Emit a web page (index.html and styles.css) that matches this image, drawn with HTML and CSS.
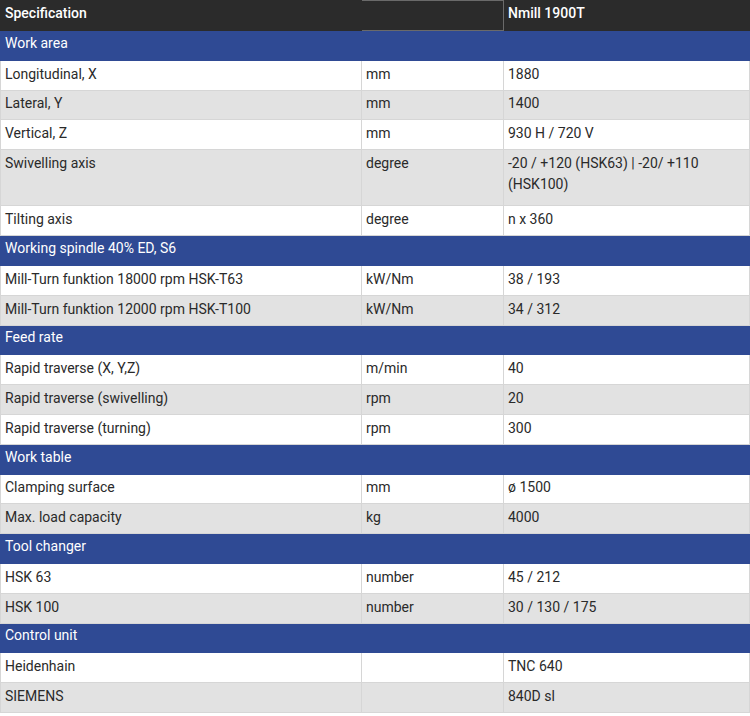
FILE: index.html
```html
<!DOCTYPE html>
<html>
<head>
<meta charset="utf-8">
<link rel="stylesheet" href="styles.css">
</head>
<body>
<table class="spec">
  <colgroup>
    <col class="c1"><col class="c2"><col class="c3">
  </colgroup>
  <thead>
    <tr class="head"><th>Specification</th><th></th><th>Nmill 1900T</th></tr>
  </thead>
  <tbody>
    <tr class="sec"><td colspan="3">Work area</td></tr>
    <tr><td>Longitudinal, X</td><td>mm</td><td>1880</td></tr>
    <tr class="alt"><td>Lateral, Y</td><td>mm</td><td>1400</td></tr>
    <tr><td>Vertical, Z</td><td>mm</td><td>930 H / 720 V</td></tr>
    <tr class="alt tall"><td>Swivelling axis</td><td>degree</td><td>-20 / +120 (HSK63) | -20/ +110 (HSK100)</td></tr>
    <tr><td>Tilting axis</td><td>degree</td><td>n x 360</td></tr>
    <tr class="sec"><td colspan="3">Working spindle 40% ED, S6</td></tr>
    <tr><td>Mill-Turn funktion 18000 rpm HSK-T63</td><td>kW/Nm</td><td>38 / 193</td></tr>
    <tr class="alt"><td>Mill-Turn funktion 12000 rpm HSK-T100</td><td>kW/Nm</td><td>34 / 312</td></tr>
    <tr class="sec"><td colspan="3">Feed rate</td></tr>
    <tr><td>Rapid traverse (X, Y,Z)</td><td>m/min</td><td>40</td></tr>
    <tr class="alt"><td>Rapid traverse (swivelling)</td><td>rpm</td><td>20</td></tr>
    <tr><td>Rapid traverse (turning)</td><td>rpm</td><td>300</td></tr>
    <tr class="sec"><td colspan="3">Work table</td></tr>
    <tr><td>Clamping surface</td><td>mm</td><td>ø 1500</td></tr>
    <tr class="alt"><td>Max. load capacity</td><td>kg</td><td>4000</td></tr>
    <tr class="sec"><td colspan="3">Tool changer</td></tr>
    <tr><td>HSK 63</td><td>number</td><td>45 / 212</td></tr>
    <tr class="alt"><td>HSK 100</td><td>number</td><td>30 / 130 / 175</td></tr>
    <tr class="sec"><td colspan="3">Control unit</td></tr>
    <tr><td>Heidenhain</td><td></td><td>TNC 640</td></tr>
    <tr class="alt"><td>SIEMENS</td><td></td><td>840D sl</td></tr>
  </tbody>
</table>
</body>
</html>
```
FILE: styles.css
```css
html, body {
  margin: 0;
  padding: 0;
  background: #ffffff;
}
body {
  font-family: Roboto, "Liberation Sans", sans-serif;
  font-size: 14px;
  color: #2a2a2a;
}
.spec {
  border-collapse: collapse;
  width: 749px;
  table-layout: fixed;
}
.c1 { width: 361px; }
.c2 { width: 142px; }
.c3 { width: 246px; }
.spec td, .spec th {
  border: 1px solid #d6d6d6;
  padding: 2.8px 4px 5px 4px;
  line-height: 21px;
  text-align: left;
  vertical-align: top;
}
.head th {
  background: #2b2b2b;
  color: #ffffff;
  font-weight: 500;
  border-color: #2b2b2b;
  padding-top: 2px;
  padding-bottom: 6px;
}
.head th:nth-child(2) {
  border: 1px solid #6a6a6a;
}
.sec td {
  background: #2f4a94;
  color: #ffffff;
  border-color: #2f4a94;
  padding-top: 1.8px;
  padding-bottom: 6px;
}
.alt td {
  background: #e2e2e2;
}
.tall td {
  padding-bottom: 10.5px;
}
```
